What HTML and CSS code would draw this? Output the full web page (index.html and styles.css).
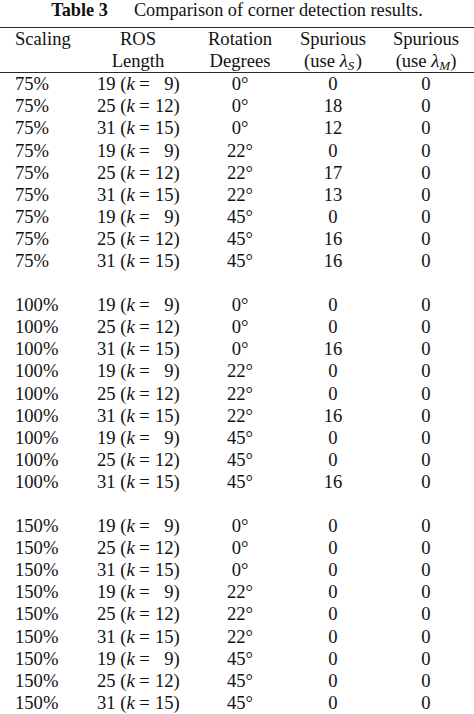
FILE: index.html
```html
<!DOCTYPE html>
<html>
<head>
<meta charset="utf-8">
<link rel="stylesheet" href="styles.css">
</head>
<body>
<div class="page">
  <div class="caption"><span class="label">Table 3</span><span>Comparison of corner detection results.</span></div>
  <table class="results">
    <colgroup>
      <col class="c1"><col class="c2"><col class="c3"><col class="c4"><col class="c5">
    </colgroup>
    <thead>
      <tr><th class="scal">Scaling</th><th class="ros">ROS</th><th>Rotation</th><th>Spurious</th><th>Spurious</th></tr>
      <tr class="last"><th class="scal"></th><th class="ros">Length</th><th>Degrees</th><th>(use <i>λ</i><sub><i>S</i></sub>&#8202;)</th><th>(use <i>λ</i><sub><i>M</i></sub>)</th></tr>
    </thead>
    <tbody>
      <tr><td class="scal">75%</td><td class="len">19 (<i>k</i> = <span class="n">9</span>)</td><td>0°</td><td>0</td><td>0</td></tr>
      <tr><td class="scal">75%</td><td class="len">25 (<i>k</i> = <span class="n">12</span>)</td><td>0°</td><td>18</td><td>0</td></tr>
      <tr><td class="scal">75%</td><td class="len">31 (<i>k</i> = <span class="n">15</span>)</td><td>0°</td><td>12</td><td>0</td></tr>
      <tr><td class="scal">75%</td><td class="len">19 (<i>k</i> = <span class="n">9</span>)</td><td>22°</td><td>0</td><td>0</td></tr>
      <tr><td class="scal">75%</td><td class="len">25 (<i>k</i> = <span class="n">12</span>)</td><td>22°</td><td>17</td><td>0</td></tr>
      <tr><td class="scal">75%</td><td class="len">31 (<i>k</i> = <span class="n">15</span>)</td><td>22°</td><td>13</td><td>0</td></tr>
      <tr><td class="scal">75%</td><td class="len">19 (<i>k</i> = <span class="n">9</span>)</td><td>45°</td><td>0</td><td>0</td></tr>
      <tr><td class="scal">75%</td><td class="len">25 (<i>k</i> = <span class="n">12</span>)</td><td>45°</td><td>16</td><td>0</td></tr>
      <tr><td class="scal">75%</td><td class="len">31 (<i>k</i> = <span class="n">15</span>)</td><td>45°</td><td>16</td><td>0</td></tr>
      <tr class="blank"><td colspan="5"></td></tr>
      <tr><td class="scal">100%</td><td class="len">19 (<i>k</i> = <span class="n">9</span>)</td><td>0°</td><td>0</td><td>0</td></tr>
      <tr><td class="scal">100%</td><td class="len">25 (<i>k</i> = <span class="n">12</span>)</td><td>0°</td><td>0</td><td>0</td></tr>
      <tr><td class="scal">100%</td><td class="len">31 (<i>k</i> = <span class="n">15</span>)</td><td>0°</td><td>16</td><td>0</td></tr>
      <tr><td class="scal">100%</td><td class="len">19 (<i>k</i> = <span class="n">9</span>)</td><td>22°</td><td>0</td><td>0</td></tr>
      <tr><td class="scal">100%</td><td class="len">25 (<i>k</i> = <span class="n">12</span>)</td><td>22°</td><td>0</td><td>0</td></tr>
      <tr><td class="scal">100%</td><td class="len">31 (<i>k</i> = <span class="n">15</span>)</td><td>22°</td><td>16</td><td>0</td></tr>
      <tr><td class="scal">100%</td><td class="len">19 (<i>k</i> = <span class="n">9</span>)</td><td>45°</td><td>0</td><td>0</td></tr>
      <tr><td class="scal">100%</td><td class="len">25 (<i>k</i> = <span class="n">12</span>)</td><td>45°</td><td>0</td><td>0</td></tr>
      <tr><td class="scal">100%</td><td class="len">31 (<i>k</i> = <span class="n">15</span>)</td><td>45°</td><td>16</td><td>0</td></tr>
      <tr class="blank"><td colspan="5"></td></tr>
      <tr><td class="scal">150%</td><td class="len">19 (<i>k</i> = <span class="n">9</span>)</td><td>0°</td><td>0</td><td>0</td></tr>
      <tr><td class="scal">150%</td><td class="len">25 (<i>k</i> = <span class="n">12</span>)</td><td>0°</td><td>0</td><td>0</td></tr>
      <tr><td class="scal">150%</td><td class="len">31 (<i>k</i> = <span class="n">15</span>)</td><td>0°</td><td>0</td><td>0</td></tr>
      <tr><td class="scal">150%</td><td class="len">19 (<i>k</i> = <span class="n">9</span>)</td><td>22°</td><td>0</td><td>0</td></tr>
      <tr><td class="scal">150%</td><td class="len">25 (<i>k</i> = <span class="n">12</span>)</td><td>22°</td><td>0</td><td>0</td></tr>
      <tr><td class="scal">150%</td><td class="len">31 (<i>k</i> = <span class="n">15</span>)</td><td>22°</td><td>0</td><td>0</td></tr>
      <tr><td class="scal">150%</td><td class="len">19 (<i>k</i> = <span class="n">9</span>)</td><td>45°</td><td>0</td><td>0</td></tr>
      <tr><td class="scal">150%</td><td class="len">25 (<i>k</i> = <span class="n">12</span>)</td><td>45°</td><td>0</td><td>0</td></tr>
      <tr><td class="scal">150%</td><td class="len">31 (<i>k</i> = <span class="n">15</span>)</td><td>45°</td><td>0</td><td>0</td></tr>
    </tbody>
  </table>
  <div class="strip"></div>
</div>
</body>
</html>
```
FILE: styles.css
```css
html, body {
  margin: 0;
  padding: 0;
  background: #ffffff;
}
.page {
  width: 474px;
  height: 715px;
  overflow: hidden;
  display: flex;
  flex-direction: column;
  font-family: "Liberation Serif", "Times New Roman", serif;
  font-size: 18.6px;
  color: #111111;
}
.caption {
  height: 20px;
  line-height: 20px;
  font-size: 18.3px;
  text-align: center;
  white-space: nowrap;
  margin-bottom: 7px;
}
.caption .label {
  font-weight: bold;
  margin-right: 26px;
}
.results {
  width: 474px;
  table-layout: fixed;
  border-collapse: collapse;
  border-top: 1px solid #2a2a2a;
}
.c1 { width: 90px; }
.c2 { width: 102px; }
.c3 { width: 96px; }
.c4 { width: 90px; }
.c5 { width: 96px; }
.results th,
.results td {
  padding: 0;
  height: 22.1px;
  line-height: 22px;
  text-align: center;
  font-weight: normal;
  white-space: nowrap;
  vertical-align: middle;
}
.results thead tr.last th {
  border-bottom: 1px solid #2a2a2a;
}
.results .scal {
  text-align: left;
  padding-left: 15px;
}
.results th.ros {
  padding-right: 6px;
}
.results td.len {
  text-align: left;
  padding-left: 7px;
}
.results .n {
  display: inline-block;
  width: 19px;
  text-align: right;
}
.results sub {
  font-size: 13px;
  line-height: 0;
  vertical-align: -3px;
}
.results tr.blank td {
  height: 22.1px;
}
.strip {
  margin-top: auto;
  height: 3px;
  background: #d4d4d4;
}
```
